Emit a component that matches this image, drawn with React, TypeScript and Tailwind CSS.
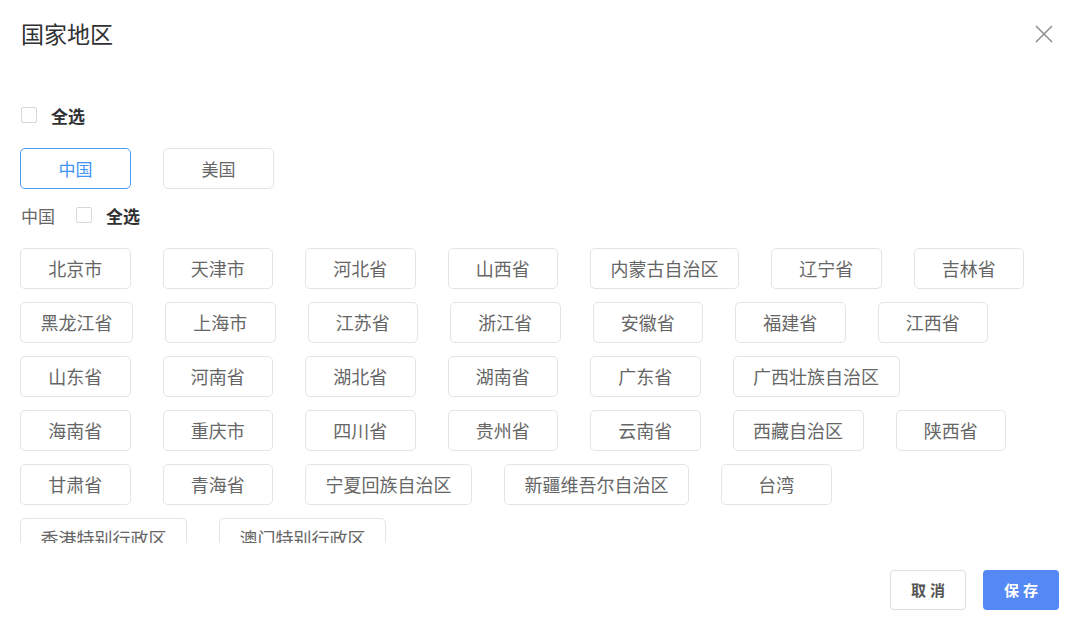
import React, { useState } from 'react';

const FONT = { fontFamily: '"Noto Sans CJK SC", "Noto Sans", sans-serif' };

const PROVINCES = [
  '北京市', '天津市', '河北省', '山西省', '内蒙古自治区', '辽宁省', '吉林省',
  '黑龙江省', '上海市', '江苏省', '浙江省', '安徽省', '福建省', '江西省',
  '山东省', '河南省', '湖北省', '湖南省', '广东省', '广西壮族自治区',
  '海南省', '重庆市', '四川省', '贵州省', '云南省', '西藏自治区', '陕西省',
  '甘肃省', '青海省', '宁夏回族自治区', '新疆维吾尔自治区', '台湾',
  '香港特别行政区', '澳门特别行政区',
];

function Checkbox() {
  return <span className="inline-block w-4 h-4 rounded-[2px] border border-[#d4d7de] bg-white" />;
}

export default function App() {
  const [country, setCountry] = useState('中国');

  return (
    <div className="w-[1080px] h-[626px] bg-white flex flex-col overflow-hidden" style={FONT}>
      {/* header */}
      <div className="h-[67px] flex items-center justify-between pl-[21px] pr-[27px]">
        <h1 className="text-[23px] text-[#303133] leading-none">国家地区</h1>
        <svg width="18" height="18" viewBox="0 0 18 18" className="text-[#8c8c8c]">
          <path d="M1 1 L17 17 M17 1 L1 17" stroke="currentColor" strokeWidth="1.5" />
        </svg>
      </div>

      {/* select all */}
      <div className="mt-[36px] h-6 flex items-center pl-[21px] gap-[14px]">
        <Checkbox />
        <span className="text-[17px] font-bold text-[#303133] leading-none">全选</span>
      </div>

      {/* countries */}
      <div className="mt-[21px] flex gap-8 pl-5">
        {['中国', '美国'].map(c => (
          <button
            key={c}
            onClick={() => setCountry(c)}
            className={`w-[111px] h-[41px] rounded-[5px] border text-[17px] ${
              country === c
                ? 'border-[#4a9bf7] text-[#3f93f3]'
                : 'border-[#e4e4e4] text-[#666666]'
            }`}
          >
            {c}
          </button>
        ))}
      </div>

      {/* sub header */}
      <div className="mt-[14px] h-6 flex items-center pl-[21px]">
        <span className="text-[17px] text-[#666666] leading-none">中国</span>
        <span className="ml-[21px] flex items-center gap-[14px]">
          <Checkbox />
          <span className="text-[17px] font-bold text-[#303133] leading-none">全选</span>
        </span>
      </div>

      {/* provinces */}
      <div className="mt-[21px] h-[295px] overflow-hidden pl-5 pr-5">
        <div className="flex flex-wrap">
          {PROVINCES.map(p => (
            <button
              key={p}
              className="min-w-[110.5px] h-[41px] px-[19.5px] mr-8 mb-[13px] rounded-[5px] border border-[#e4e4e4] text-[18px] text-[#666666] whitespace-nowrap"
            >
              {p}
            </button>
          ))}
        </div>
      </div>

      {/* footer */}
      <div className="mt-[27px] flex justify-end gap-[17px] pr-[21px]">
        <button className="w-[76px] h-[40px] rounded-[4px] border border-[#dcdfe6] bg-white text-[15px] font-bold text-[#555555] tracking-[4px] pl-[4px]">
          取消
        </button>
        <button className="w-[76px] h-[40px] rounded-[4px] bg-[#5488f4] text-[15px] font-bold text-white tracking-[4px] pl-[4px]">
          保存
        </button>
      </div>
    </div>
  );
}
